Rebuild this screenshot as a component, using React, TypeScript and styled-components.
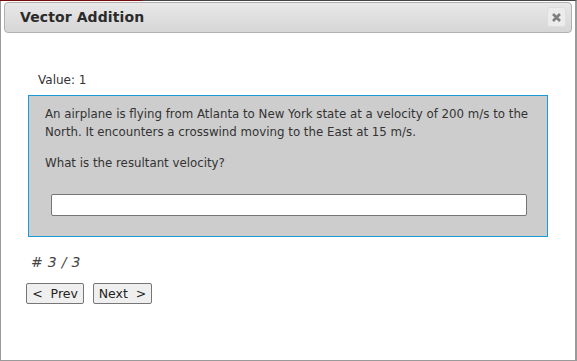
import React from "react";
import styled, { createGlobalStyle } from "styled-components";

const Global = createGlobalStyle`
  html, body { margin: 0; padding: 0; background: #fff; }
  body { font-family: "DejaVu Sans", Verdana, sans-serif; }
  * { box-sizing: border-box; }
`;

const Dialog = styled.div`
  width: 577px;
  height: 361px;
  border: 1px solid #9a9a9a;
  border-top: 1px solid #444;
  border-right-width: 2px;
  background: #fff;
  padding: 1px 3px 0 3px;
  display: flex;
  flex-direction: column;
  position: relative;
`;

const TopAccent = styled.div`
  position: absolute;
  left: -1px;
  top: -1px;
  width: 142px;
  height: 1px;
  background: #7a0a0a;
`;

const TitleBar = styled.div`
  height: 31px;
  border: 1px solid #b0b0b0;
  border-radius: 4px;
  background: linear-gradient(#e8e8e8, #d6d6d6);
  display: flex;
  align-items: center;
  justify-content: space-between;
  padding: 0 5px 0 15px;
`;

const Title = styled.span`
  font-weight: bold;
  font-size: 14px;
  color: #2b2b2b;
  letter-spacing: 0.1px;
  margin-top: -1px;
`;

const CloseButton = styled.button`
  width: 19px;
  height: 20px;
  border: 1px solid #dedede;
  border-radius: 3px;
  background: #ececec;
  padding: 0;
  display: flex;
  align-items: center;
  justify-content: center;
  margin-top: -1px;
`;

const Content = styled.div`
  padding: 40px 24px 0 24px;
  display: flex;
  flex-direction: column;
  color: #333;
  font-size: 12px;
`;

const ValueLabel = styled.div`
  padding-left: 10px;
  font-size: 12px;
  line-height: 15px;
  color: #333;
  margin-bottom: 7px;
`;

const QuestionBox = styled.div`
  width: 520px;
  height: 142px;
  background: #cdcdcd;
  border: 1px solid #1a9ad6;
  padding: 9px 16px 0 16px;
`;

const Para = styled.p<{ $gap?: number }>`
  margin: 0 0 ${(p) => p.$gap ?? 0}px 0;
  font-size: 11.8px;
  line-height: 18px;
  color: #333;
`;

const AnswerInput = styled.input`
  display: block;
  margin: 22px 0 0 6px;
  width: 476px;
  height: 22px;
  border: 1px solid #767676;
  border-radius: 2px;
  background: #fff;
`;

const Counter = styled.div`
  margin: 17px 0 0 3px;
  font-style: italic;
  font-size: 14px;
  letter-spacing: 0.3px;
  color: #444;
`;

const NavRow = styled.div`
  display: flex;
  gap: 9px;
  margin-top: 13px;
  margin-left: -2px;
`;

const NavButton = styled.button<{ $w: number }>`
  width: ${(p) => p.$w}px;
  height: 21px;
  background: #efefef;
  border: 1px solid #767676;
  border-radius: 2px;
  font-family: "DejaVu Sans", Verdana, sans-serif;
  font-size: 12.5px;
  color: #222;
  padding: 0;
  white-space: pre;
`;

export default function App() {
  return (
    <>
      <Global />
      <Dialog>
        <TopAccent />
        <TitleBar>
          <Title>Vector Addition</Title>
          <CloseButton aria-label="close">
            <svg width="11" height="11" viewBox="0 0 11 11">
              <path d="M2 2 L9 9 M9 2 L2 9" stroke="#7e7e7e" strokeWidth="2.6" />
            </svg>
          </CloseButton>
        </TitleBar>
        <Content>
          <ValueLabel>Value: 1</ValueLabel>
          <QuestionBox>
            <Para $gap={13}>
              An airplane is flying from Atlanta to New York state at a velocity of 200 m/s to the North. It
              encounters a crosswind moving to the East at 15 m/s.
            </Para>
            <Para>What is the resultant velocity?</Para>
            <AnswerInput type="text" />
          </QuestionBox>
          <Counter># 3 / 3</Counter>
          <NavRow>
            <NavButton $w={58}>{"<  Prev"}</NavButton>
            <NavButton $w={59}>{"Next  >"}</NavButton>
          </NavRow>
        </Content>
      </Dialog>
    </>
  );
}
